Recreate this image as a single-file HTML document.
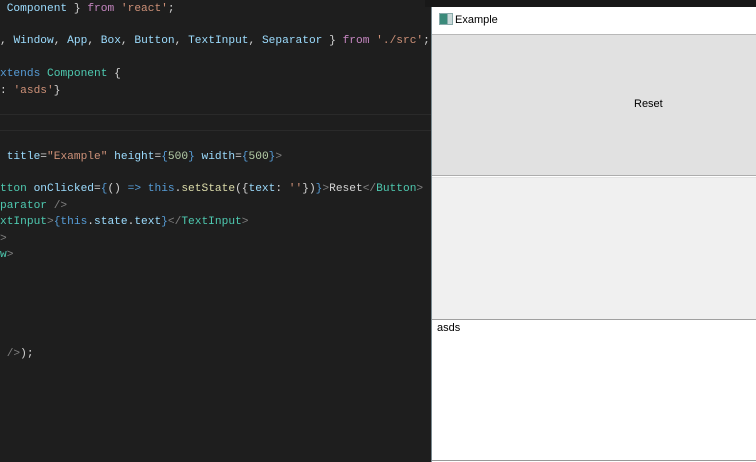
<!DOCTYPE html>
<html><head><style>
body{margin:0;width:756px;height:462px;overflow:hidden;background:#1e1e1e;position:relative;font-family:"Liberation Sans",sans-serif}
#code{position:absolute;left:0;top:0.5px;font-family:"Liberation Mono",monospace;font-size:11.2px;line-height:16.45px;color:#d4d4d4;white-space:pre}
.l{color:#9cdcfe}.k{color:#c586c0}.s{color:#ce9178}.t{color:#4ec9b0}.g{color:#808080}.b{color:#569cd6}.f{color:#dcdcaa}.n{color:#b5cea8}
#hl{position:absolute;left:0;top:114px;width:431px;height:15px;border-top:1px solid #2a2a2a;border-bottom:1px solid #2a2a2a}
#win{position:absolute;left:431px;top:7px;width:325px;height:455px;background:#fff;border-left:1px solid #7a8a90}
#top{position:absolute;left:425px;top:0;width:331px;height:7px;background:#181818}
#title{position:absolute;left:0;top:0;width:325px;height:27px;background:#fff;font-size:11px;color:#000}
#btn{position:absolute;left:0;top:27px;width:325px;height:140px;background:#e1e1e1;border-top:1px solid #b8b8b8;border-bottom:1px solid #adadad;font-size:11px;color:#000}
#box{position:absolute;left:0;top:170px;width:325px;height:141px;background:#f0f0f0;border-top:1px solid #e3e3e3;border-bottom:1px solid #a0a0a0}
#inp{position:absolute;left:0;top:313px;width:325px;height:140px;background:#fff;border-bottom:1px solid #999;font-size:11px;color:#000}
</style></head><body>
<div id="hl"></div>
<div id="code"> <span class="l">Component</span> } <span class="k">from</span> <span class="s">'react'</span>;

, <span class="l">Window</span>, <span class="l">App</span>, <span class="l">Box</span>, <span class="l">Button</span>, <span class="l">TextInput</span>, <span class="l">Separator</span> } <span class="k">from</span> <span class="s">'./src'</span>;

<span class="b">xtends</span> <span class="t">Component</span> {
: <span class="s">'asds'</span>}



 <span class="l">title</span>=<span class="s">"Example"</span> <span class="l">height</span>=<span class="b">{</span><span class="n">500</span><span class="b">}</span> <span class="l">width</span>=<span class="b">{</span><span class="n">500</span><span class="b">}</span><span class="g">&gt;</span>

<span class="t">tton</span> <span class="l">onClicked</span>=<span class="b">{</span>() <span class="b">=&gt;</span> <span class="b">this</span>.<span class="f">setState</span>({<span class="l">text</span>: <span class="s">''</span>})<span class="b">}</span><span class="g">&gt;</span>Reset<span class="g">&lt;/</span><span class="t">Button</span><span class="g">&gt;</span>
<span class="t">parator</span> <span class="g">/&gt;</span>
<span class="t">xtInput</span><span class="g">&gt;</span><span class="b">{this</span>.<span class="l">state</span>.<span class="l">text</span><span class="b">}</span><span class="g">&lt;/</span><span class="t">TextInput</span><span class="g">&gt;</span>
<span class="g">&gt;</span>
<span class="t">w</span><span class="g">&gt;</span>





 <span class="g">/&gt;</span>);</div>
<div id="top"></div>
<div id="win">
 <div id="title"><svg style="position:absolute;left:7px;top:6px" width="14" height="12"><rect x="0" y="0" width="14" height="12" fill="#8aa"/><rect x="1" y="1" width="7" height="10" fill="#3a8a7a"/><rect x="9" y="1" width="4" height="10" fill="#c8d8d8"/></svg><span style="position:absolute;left:23px;top:7px">Example</span></div>
 <div id="btn"><span style="position:absolute;left:202px;top:63px">Reset</span></div>
 <div id="box"></div>
 <div id="inp"><span style="position:absolute;left:5px;top:2px">asds</span></div>
</div>
</body></html>
